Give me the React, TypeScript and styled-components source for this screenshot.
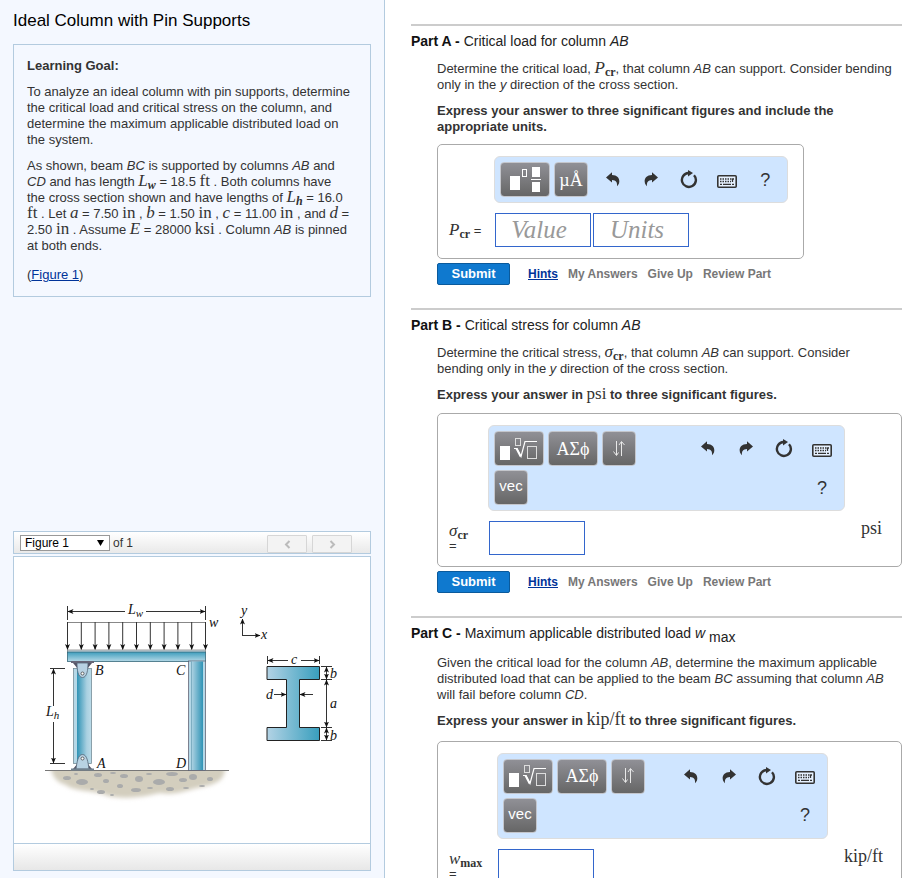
import React from "react";
import styled, { createGlobalStyle } from "styled-components";

const GlobalStyle = createGlobalStyle`
  * { box-sizing: border-box; }
  body {
    margin: 0;
    background: #fff;
    color: #333;
    font: 13px/16px "Liberation Sans", Arial, sans-serif;
  }
  h1, h2, h3, p { margin: 0; font-weight: normal; }
  button, input, select { font: inherit; }
`;

const serif = `"Liberation Serif", "Times New Roman", serif`;
const line = "#b3cbdf";

/* ---------- page frame ---------- */

const Page = styled.div`
  display: grid;
  grid-template-columns: 385px minmax(0, 1fr);
  height: 100vh;
`;

const Sidebar = styled.aside`
  display: flex;
  flex-direction: column;
  justify-content: space-between;
  padding: 12px 13px 7px;
  background: #f4f8ff;
  border-right: 1px solid ${line};
  overflow: hidden;
`;

const Content = styled.main`
  padding: 24px 13px 24px 26px;
  overflow-y: auto;
  scrollbar-width: none;
`;

/* ---------- math type ---------- */

const MathText = styled.span<{ $slanted?: boolean; $size?: number }>`
  font-family: ${serif};
  font-size: ${(p) => p.$size ?? 17}px;
  font-style: ${(p) => (p.$slanted ? "italic" : "normal")};
  font-weight: normal;
  line-height: 1px;
`;

const MathSub = styled.sub<{ $slanted?: boolean }>`
  font-family: ${serif};
  font-size: 12px;
  font-weight: bold;
  font-style: ${(p) => (p.$slanted ? "italic" : "normal")};
  line-height: 1px;
  vertical-align: -3px;
`;

const Sym = ({ v, sub, slantedSub }: { v: string; sub?: string; slantedSub?: boolean }) => (
  <>
    <MathText $slanted>{v}</MathText>
    {sub && <MathSub $slanted={slantedSub}>{sub}</MathSub>}
  </>
);

const Unit = ({ children }: { children: string }) => <MathText>{children}</MathText>;

/* ---------- sidebar ---------- */

const PageTitle = styled.h1`
  margin-bottom: 15px;
  font-size: 17px;
  line-height: 17px;
  color: #000;
`;

const GoalBox = styled.section`
  display: flex;
  flex-direction: column;
  gap: 10px;
  padding: 13px;
  border: 1px solid ${line};
`;

const GoalTitle = styled.h2`
  font-size: 13px;
  line-height: 16px;
  font-weight: bold;
`;

const FigureRef = styled.p`
  padding-top: 3px;
`;

const Anchor = styled.a`
  color: #003399;
  text-decoration: underline;
`;

const FigureArea = styled.section`
  display: flex;
  flex-direction: column;
  gap: 2px;
`;

const FigureBar = styled.div`
  display: flex;
  align-items: center;
  gap: 3px;
  height: 23px;
  padding: 0 18px 0 6px;
  border: 1px solid ${line};
  background: linear-gradient(#fff, #e9e9e9);
  font-size: 12px;
`;

const SelectFrame = styled.span`
  display: flex;
  align-items: center;
  width: 90px;
  height: 16px;
  padding-right: 5px;
  border: 1px solid #999;
  background: #fff;
`;

const FigureSelect = styled.select`
  flex: 1;
  min-width: 0;
  height: 14px;
  padding: 0 0 0 4px;
  border: 0;
  appearance: none;
  background: transparent;
  color: #000;
  line-height: 14px;
`;

const Pager = styled.div`
  display: flex;
  align-self: flex-end;
  gap: 5px;
  margin-left: auto;
`;

const PagerButton = styled.button`
  display: flex;
  align-items: center;
  justify-content: center;
  width: 40px;
  height: 18px;
  padding: 0;
  border: 1px solid #d6d6d6;
  border-radius: 1px;
  background: #f3f3f3;
`;

const FigureFrame = styled.div`
  border: 1px solid ${line};
  background: #fff;
`;

const FigureFooter = styled.div`
  height: 27px;
  border-top: 1px solid ${line};
  background: linear-gradient(#fff, #e7e7e7);
`;

const FigureSvg = styled.svg`
  display: block;
  width: 100%;
`;

/* ---------- parts ---------- */

const Part = styled.section`
  padding-top: 7px;
  border-top: 2px solid #ccc;

  & + & {
    margin-top: 23px;
  }
`;

const PartTitle = styled.h2`
  margin-bottom: 12px;
  font-size: 14px;
  line-height: 16px;
  color: #222;

  b { color: #111; }
  sub { font-size: 14px; line-height: 12px; }
`;

const PartBody = styled.div`
  padding-left: 26px;
`;

const Prompt = styled.p`
  margin-bottom: 10px;
  padding-right: 4px;
`;

const Instruction = styled.p<{ $gap: number }>`
  margin-bottom: ${(p) => p.$gap}px;
  font-weight: bold;
`;

const AnswerBox = styled.div<{ $label: number; $compact?: boolean; $right: number }>`
  display: grid;
  grid-template-columns: ${(p) => p.$label}px minmax(0, 1fr) auto;
  row-gap: 10px;
  width: ${(p) => (p.$compact ? "79%" : "100%")};
  padding: 11px ${(p) => p.$right}px 11px 11px;
  border: 1px solid #aaa;
  border-radius: 5px;
`;

const Toolbar = styled.div`
  grid-column: 2;
  display: flex;
  justify-content: space-between;
  padding: 5px 3px 5px 5px;
  border: 1px solid #ddd;
  border-radius: 6px;
  background: #cfe5ff;
`;

const Tools = styled.div<{ $wide?: boolean }>`
  display: flex;
  flex: none;
  flex-wrap: wrap;
  align-content: flex-start;
  gap: 4px;
  width: ${(p) => (p.$wide ? 90 : 150)}px;
`;

const ToolButton = styled.button<{ $wide?: boolean; $text?: "greek" | "sans" }>`
  display: flex;
  align-items: center;
  justify-content: center;
  width: ${(p) => (p.$wide ? 50 : 34)}px;
  height: 35px;
  padding: ${(p) => (p.$text === "sans" ? "0 0 3px" : "0")};
  border: 1px solid #c4c6cc;
  border-radius: 4px;
  background: linear-gradient(#909096, #666);
  color: #fff;
  font-family: ${(p) => (p.$text === "sans" ? `"Liberation Sans", sans-serif` : serif)};
  font-size: ${(p) => (p.$text === "sans" ? 15 : 18)}px;
  line-height: 20px;
`;

const Icons = styled.div<{ $wide?: boolean }>`
  display: flex;
  flex: none;
  flex-wrap: wrap;
  justify-content: flex-end;
  row-gap: 4px;
  width: ${(p) => (p.$wide ? 190 : 152)}px;
`;

const IconButton = styled.button`
  display: flex;
  align-items: center;
  justify-content: center;
  width: 38px;
  height: 35px;
  padding: 0;
  border: 0;
  background: transparent;
  color: #333;
  font-size: 18px;
`;

const AnswerLabel = styled.label<{ $stacked?: boolean }>`
  grid-column: 1;
  align-self: start;
  padding-top: ${(p) => (p.$stacked ? 4 : 11)}px;
  line-height: 14px;
`;

const Fields = styled.div`
  display: flex;
  gap: 2px;
  padding-left: 1px;
`;

const Field = styled.input`
  width: 96px;
  height: 34px;
  padding: 0 8px 0 0;
  border: 1px solid #3366cc;
  border-radius: 0;
  background: #fff;
  color: #333;
  font: italic 25px/30px ${serif};
  text-align: center;

  &::placeholder { color: #999; opacity: 1; }
`;

const UnitCell = styled.div`
  padding: 1px 0 0 16px;
  line-height: 16px;
`;

const Actions = styled.div`
  display: flex;
  align-items: center;
  gap: 10px;
  margin-top: 4px;
  font-size: 12px;
  font-weight: bold;
  color: #777;
`;

const SubmitButton = styled.button`
  width: 73px;
  height: 22px;
  margin-right: 8px;
  padding: 0;
  border: 1px solid #0a5a9c;
  border-radius: 2px;
  background: #0f79cf;
  color: #fff;
  font-size: 13px;
  font-weight: bold;
`;

const ActionLink = styled.a<{ $active?: boolean }>`
  color: ${(p) => (p.$active ? "#003399" : "#777")};
  text-decoration: ${(p) => (p.$active ? "underline" : "none")};
`;

/* ---------- icons ---------- */

const TemplateUnitsIcon = () => (
  <svg width="32" height="26" viewBox="0 0 32 26" aria-hidden="true">
    <rect x="1" y="9" width="10" height="14" fill="#fff" />
    <rect x="13.5" y="2.500" width="4" height="7" fill="none" stroke="#fff" />
    <rect x="23" y="0" width="8" height="10" fill="#fff" />
    <rect x="22" y="12" width="10" height="1" fill="#fff" />
    <rect x="23" y="15" width="8" height="10" fill="#fff" />
  </svg>
);

const TemplateRootIcon = () => (
  <svg width="38" height="24" viewBox="0 0 38 24" aria-hidden="true">
    <rect x="0" y="9" width="10" height="14" fill="#fff" />
    <rect x="15.500" y="1.500" width="5" height="7" fill="none" stroke="#ddd" />
    <path d="M14 11.500 h3 l4 8 L25 4.500 H37" fill="none" stroke="#fff" strokeWidth="1.200" />
    <path d="M16.500 11.500 l4.200 8" fill="none" stroke="#fff" strokeWidth="2" />
    <rect x="27.500" y="9.500" width="9" height="12" fill="none" stroke="#ddd" />
  </svg>
);

const SwapIcon = () => (
  <svg width="14" height="18" viewBox="0 0 14 18" aria-hidden="true" fill="none" stroke="#e8e8e8">
    <path d="M4.500 1 V15 M1.500 11.500 L4.500 15.500 L6.500 12.500 M9.500 16 V2 M7 5 L9.500 1.500 L12.500 5" />
  </svg>
);

const ARROW = "M0 5.500 L6 0.300 V3 C11 3.200 13.700 6 13.300 9.800 C13.100 11.800 12.300 13.200 11 14.300 C11.500 10.500 10 8.300 6 8.100 V10.500 Z";

const UndoIcon = () => (
  <svg width="14" height="15" viewBox="0 0 14 15" aria-hidden="true">
    <path d={ARROW} fill="#333" />
  </svg>
);

const RedoIcon = () => (
  <svg width="14" height="15" viewBox="0 0 14 15" aria-hidden="true">
    <path d={ARROW} fill="#333" transform="matrix(-1 0 0 1 14 0)" />
  </svg>
);

const ResetIcon = () => (
  <svg width="18" height="19" viewBox="0 0 18 19" aria-hidden="true">
    <path d="M14 5.200 A7 7 0 1 1 8.500 3" fill="none" stroke="#333" strokeWidth="2.400" />
    <path d="M8 0 L13 3 L8 6.500 Z" fill="#333" />
  </svg>
);

const KeyboardIcon = () => (
  <svg width="20" height="16" viewBox="0 -3 20 16" aria-hidden="true">
    <rect x="0.800" y="0.800" width="18.400" height="11.400" rx="1" fill="#e6f1ff" stroke="#333" strokeWidth="1.600" />
    <path d="M3 4 H17 M3 6.500 H14" stroke="#333" strokeWidth="1.500" strokeDasharray="1.500 1" />
    <path d="M15.500 3.500 V7 M3 9.300 H5 M6 9.300 H14 M15 9.300 H17" stroke="#333" strokeWidth="1.300" />
  </svg>
);

const Chevron = ({ right }: { right?: boolean }) => (
  <svg width="7" height="9" viewBox="0 0 7 9" aria-hidden="true">
    <path d={right ? "M1.500 1 L5 4.500 L1.500 8" : "M5.500 1 L2 4.500 L5.500 8"} fill="none" stroke="#bbb" strokeWidth="2" />
  </svg>
);

/* ---------- figure ---------- */

const Label = styled.text`
  font: italic 14px ${serif};
  fill: #111;
`;

const SubLabel = styled.tspan`
  font-size: 11px;
`;

const STONES: [number, number, number, number][] = [
  [67, 778, 4, 2], [82, 782, 6, 3], [98, 775, 4, 2], [106, 781, 3, 2], [124, 776, 4, 2],
  [139, 779, 4, 3], [136, 790, 5, 2], [159, 782, 6, 3], [172, 774, 6, 2], [183, 780, 4, 2],
  [193, 777, 4, 3], [210, 779, 3, 2], [170, 789, 4, 2], [101, 792, 4, 2], [150, 788, 3, 1],
  [120, 786, 3, 2], [92, 789, 2, 1], [202, 786, 3, 1], [113, 773, 3, 1], [76, 774, 2, 1],
  [112, 795, 2, 1], [186, 788, 3, 1], [149, 774, 3, 1],
];

const Figure = () => (
  <FigureSvg viewBox="14 557 356 286" role="img" aria-label="Beam BC on columns AB and CD with I-shaped cross section">
    <defs>
      <linearGradient id="beam" x1="0" y1="0" x2="0" y2="1">
        <stop offset="0" stopColor="#3d9dbc" />
        <stop offset="1" stopColor="#b5d9e7" />
      </linearGradient>
      <linearGradient id="colAB">
        <stop offset="0" stopColor="#2f93b5" />
        <stop offset="0.700" stopColor="#a9d0e1" />
        <stop offset="1" stopColor="#b9dae8" />
      </linearGradient>
      <linearGradient id="colCD">
        <stop offset="0" stopColor="#b5d6e5" />
        <stop offset="1" stopColor="#2f93b5" />
      </linearGradient>
      <linearGradient id="section" gradientUnits="userSpaceOnUse" x1="267" y1="0" x2="320" y2="0">
        <stop offset="0" stopColor="#b3d3e5" />
        <stop offset="1" stopColor="#379ebd" />
      </linearGradient>
      <filter id="soft" x="-10%" y="-30%" width="120%" height="160%">
        <feGaussianBlur stdDeviation="2" />
      </filter>
      <clipPath id="below">
        <rect x="40" y="771" width="200" height="40" />
      </clipPath>
      <marker id="tip" viewBox="0 0 6 6" refX="5.500" refY="3" markerWidth="6" markerHeight="6" orient="auto-start-reverse" markerUnits="userSpaceOnUse">
        <path d="M0 0.500 L6 3 L0 5.500 L1.500 3 Z" fill="#111" />
      </marker>
    </defs>

    <g clipPath="url(#below)">
      <path d="M50 766 H225 C226 780 216 784 202 787 C186 790 176 796 160 793 C146 796 128 800 108 796 C96 790 74 792 66 785 C56 782 52 776 50 766 Z" fill="#d3cebe" filter="url(#soft)" />
      {STONES.map(([x, y, rx, ry]) => (
        <ellipse key={`${x}-${y}`} cx={x} cy={y} rx={rx} ry={ry} fill="#aaabab" />
      ))}
    </g>
    <path d="M45 770.500 H229" stroke="#777" />

    <g stroke="#333" fill="none">
      <path d="M67.500 606 V620 M205.500 606 V620" />
      <path d="M125 611.500 H68" markerEnd="url(#tip)" />
      <path d="M146 611.500 H205" markerEnd="url(#tip)" />
      <path d="M67 622.500 H206" stroke="#888" />
      {Array.from({ length: 11 }, (_, i) => 67.5 + i * 13.8).map((x) => (
        <path key={x} d={`M${x} 622 V649.500`} markerEnd="url(#tip)" />
      ))}
    </g>

    <rect x="67.500" y="650" width="138" height="3" fill="#c8dde6" stroke="#777" strokeWidth="0.700" />
    <rect x="67.500" y="652" width="138" height="9.500" fill="url(#beam)" stroke="#356779" strokeWidth="0.800" />

    <rect x="188.500" y="661" width="17" height="109.500" fill="#b5d8e7" stroke="#556" strokeWidth="0.700" />
    <rect x="191" y="661.500" width="12" height="108.500" fill="url(#colCD)" />
    <path d="M191.500 661 V770" stroke="#7eaec2" />

    <rect x="73.500" y="668.500" width="18" height="95" fill="#b5d8e7" stroke="#68808a" strokeWidth="0.700" />
    <rect x="77" y="669" width="14" height="94" fill="url(#colAB)" />
    <rect x="71" y="661" width="23" height="2" fill="#667" />
    <path d="M73 663 H92 L87 669 H78 Z" fill="#556" />
    <path d="M77 663 H88 C88 670 87 677.500 82.500 677.500 C78 677.500 77 670 77 663 Z" fill="#b8d2e3" stroke="#567" strokeWidth="0.800" />
    <circle cx="82.500" cy="673.500" r="1.500" fill="#fff" stroke="#444" strokeWidth="0.800" />
    <path d="M73 769 H92 L87 763 H78 Z" fill="#556" />
    <path d="M76 769 H89 C88 762 87 754.500 82.500 754.500 C78 754.500 77 762 76 769 Z" fill="#b8d2e3" stroke="#567" strokeWidth="0.800" />
    <circle cx="82.500" cy="758.500" r="1.500" fill="#fff" stroke="#444" strokeWidth="0.800" />
    <rect x="71" y="768.500" width="23" height="2" fill="#72828f" />

    <g stroke="#333" fill="none">
      <path d="M50 668.500 H65 M50 763.500 H65" />
      <path d="M53.500 706 V669" markerEnd="url(#tip)" />
      <path d="M53.500 722 V763" markerEnd="url(#tip)" />
      <path d="M242.500 636 V619" markerEnd="url(#tip)" />
      <path d="M242 635.500 H260" markerEnd="url(#tip)" />
      <path d="M267.500 656 V664 M319.500 656 V664" />
      <path d="M288 660.500 H268" markerEnd="url(#tip)" />
      <path d="M301 660.500 H319" markerEnd="url(#tip)" />
      <path d="M321 666.500 H332 M321 679.500 H332 M321 727.500 H332 M321 740.500 H332" />
      <path d="M326.500 667 V679" markerStart="url(#tip)" markerEnd="url(#tip)" />
      <path d="M326.500 680 V727" markerStart="url(#tip)" markerEnd="url(#tip)" />
      <path d="M326.500 728 V740" markerStart="url(#tip)" markerEnd="url(#tip)" />
      <path d="M274 694.500 H286" markerEnd="url(#tip)" />
      <path d="M313 694.500 H300" markerEnd="url(#tip)" />
    </g>
    <path d="M267 666.500 H319.500 V679.500 H299.500 V727.500 H319.500 V740.500 H267 V727.500 H286.500 V679.500 H267 Z" fill="url(#section)" stroke="#222" />

    <Label x="128" y="614">L<SubLabel dy="3">w</SubLabel></Label>
    <Label x="209" y="627">w</Label>
    <Label x="95" y="675">B</Label>
    <Label x="176" y="675">C</Label>
    <Label x="97" y="768">A</Label>
    <Label x="176" y="768">D</Label>
    <Label x="46" y="716">L<SubLabel dy="3">h</SubLabel></Label>
    <Label x="241" y="615">y</Label>
    <Label x="261" y="639">x</Label>
    <Label x="291" y="664">c</Label>
    <Label x="330" y="678">b</Label>
    <Label x="330" y="708">a</Label>
    <Label x="330" y="740">b</Label>
    <Label x="266" y="699">d</Label>
  </FigureSvg>
);

/* ---------- composed pieces ---------- */

const IconSet = ({ wide }: { wide?: boolean }) => (
  <Icons $wide={wide}>
    <IconButton type="button" aria-label="Undo"><UndoIcon /></IconButton>
    <IconButton type="button" aria-label="Redo"><RedoIcon /></IconButton>
    <IconButton type="button" aria-label="Reset"><ResetIcon /></IconButton>
    <IconButton type="button" aria-label="Keyboard shortcuts"><KeyboardIcon /></IconButton>
    <IconButton type="button" aria-label="Help">?</IconButton>
  </Icons>
);

const MathToolbar = () => (
  <Toolbar>
    <Tools>
      <ToolButton type="button" $wide aria-label="Templates"><TemplateRootIcon /></ToolButton>
      <ToolButton type="button" $wide $text="greek">ΑΣϕ</ToolButton>
      <ToolButton type="button" aria-label="Arrows"><SwapIcon /></ToolButton>
      <ToolButton type="button" $text="sans">vec</ToolButton>
    </Tools>
    <IconSet />
  </Toolbar>
);

const ActionRow = () => (
  <Actions>
    <SubmitButton type="button">Submit</SubmitButton>
    <ActionLink href="#hints" $active>Hints</ActionLink>
    <ActionLink href="#answers">My Answers</ActionLink>
    <ActionLink href="#give-up">Give Up</ActionLink>
    <ActionLink href="#review">Review Part</ActionLink>
  </Actions>
);

export default function App() {
  return (
    <>
      <GlobalStyle />
      <Page>
        <Sidebar>
          <div>
            <PageTitle>Ideal Column with Pin Supports</PageTitle>
            <GoalBox>
              <GoalTitle>Learning Goal:</GoalTitle>
              <p>
                To analyze an ideal column with pin supports, determine the critical load and critical
                stress on the column, and determine the maximum applicable distributed load on the system.
              </p>
              <p>
                As shown, beam <i>BC</i> is supported by columns <i>AB</i> and<br />
                <i>CD</i> and has length <Sym v="L" sub="w" slantedSub /> = 18.5 <Unit>ft</Unit> . Both
                columns have<br />
                the cross section shown and have lengths of <Sym v="L" sub="h" slantedSub /> = 16.0<br />
                <Unit>ft</Unit> . Let <Sym v="a" /> = 7.50 <Unit>in</Unit> , <Sym v="b" /> =
                1.50 <Unit>in</Unit> , <Sym v="c" /> = 11.00 <Unit>in</Unit> , and <Sym v="d" /> =<br />
                2.50 <Unit>in</Unit> . Assume <Sym v="E" /> = 28000 <Unit>ksi</Unit> . Column <i>AB</i> is
                pinned<br />
                at both ends.
              </p>
              <FigureRef>(<Anchor href="#figure">Figure 1</Anchor>)</FigureRef>
            </GoalBox>
          </div>

          <FigureArea id="figure">
            <FigureBar>
              <SelectFrame>
                <FigureSelect aria-label="Figure" defaultValue="1">
                  <option value="1">Figure 1</option>
                </FigureSelect>
                <svg width="7" height="6" viewBox="0 0 7 6" aria-hidden="true">
                  <path d="M0 0 H7 L3.500 6 Z" fill="#000" />
                </svg>
              </SelectFrame>
              <span>of 1</span>
              <Pager>
                <PagerButton type="button" aria-label="Previous figure"><Chevron /></PagerButton>
                <PagerButton type="button" aria-label="Next figure"><Chevron right /></PagerButton>
              </Pager>
            </FigureBar>
            <FigureFrame>
              <Figure />
              <FigureFooter />
            </FigureFrame>
          </FigureArea>
        </Sidebar>

        <Content>
          <Part>
            <PartTitle><b>Part A - </b>Critical load for column <i>AB</i></PartTitle>
            <PartBody>
              <Prompt>
                Determine the critical load, <Sym v="P" sub="cr" />, that column <i>AB</i> can support.
                Consider bending only in the <i>y</i> direction of the cross section.
              </Prompt>
              <Instruction $gap={9}>
                Express your answer to three significant figures and include the appropriate units.
              </Instruction>
              <AnswerBox $label={45} $right={15} $compact>
                <Toolbar>
                  <Tools $wide>
                    <ToolButton type="button" $wide aria-label="Templates"><TemplateUnitsIcon /></ToolButton>
                    <ToolButton type="button" $text="greek">µÅ</ToolButton>
                  </Tools>
                  <IconSet wide />
                </Toolbar>
                <AnswerLabel htmlFor="pcr"><Sym v="P" sub="cr" /> =</AnswerLabel>
                <Fields>
                  <Field id="pcr" placeholder="Value" />
                  <Field aria-label="Units" placeholder="Units" />
                </Fields>
              </AnswerBox>
              <ActionRow />
            </PartBody>
          </Part>

          <Part>
            <PartTitle><b>Part B - </b>Critical stress for column <i>AB</i></PartTitle>
            <PartBody>
              <Prompt>
                Determine the critical stress, <Sym v="σ" sub="cr" />, that column <i>AB</i> can support.
                Consider bending only in the <i>y</i> direction of the cross section.
              </Prompt>
              <Instruction $gap={10}>
                Express your answer in <Unit>psi</Unit> to three significant figures.
              </Instruction>
              <AnswerBox $label={39} $right={19}>
                <MathToolbar />
                <AnswerLabel htmlFor="scr" $stacked><Sym v="σ" sub="cr" /><br />=</AnswerLabel>
                <Fields><Field id="scr" /></Fields>
                <UnitCell><MathText $size={18}>psi</MathText></UnitCell>
              </AnswerBox>
              <ActionRow />
            </PartBody>
          </Part>

          <Part>
            <PartTitle>
              <b>Part C - </b>Maximum applicable distributed load <i>w</i> <sub>max</sub>
            </PartTitle>
            <PartBody>
              <Prompt>
                Given the critical load for the column <i>AB</i>, determine the maximum applicable
                distributed load that can be applied to the beam <i>BC</i> assuming that
                column <i>AB</i> will fail before column <i>CD</i>.
              </Prompt>
              <Instruction $gap={12}>
                Express your answer in <MathText $size={18}>kip/ft</MathText> to three significant figures.
              </Instruction>
              <AnswerBox $label={48} $right={18}>
                <MathToolbar />
                <AnswerLabel htmlFor="wmax" $stacked><Sym v="w" sub="max" /><br />=</AnswerLabel>
                <Fields><Field id="wmax" /></Fields>
                <UnitCell><MathText $size={18}>kip/ft</MathText></UnitCell>
              </AnswerBox>
              <ActionRow />
            </PartBody>
          </Part>
        </Content>
      </Page>
    </>
  );
}
